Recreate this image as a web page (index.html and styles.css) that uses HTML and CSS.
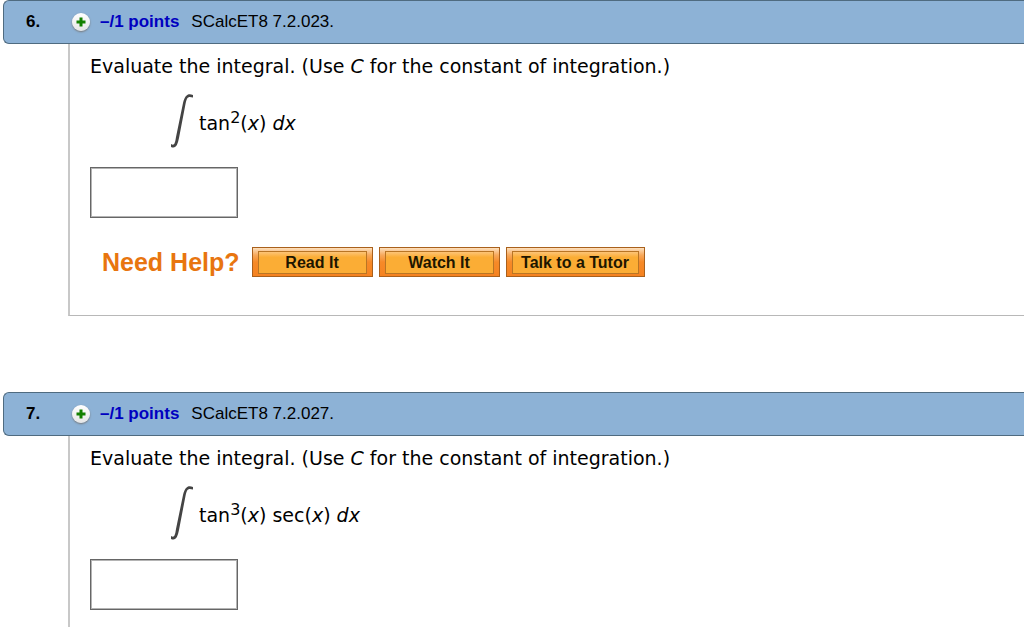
FILE: index.html
```html
<!DOCTYPE html>
<html lang="en">
<head>
<meta charset="utf-8">
<title>Homework</title>
<link rel="stylesheet" href="styles.css">
</head>
<body>
<main class="assignment">
  <section class="question">
    <header class="question-header">
      <span class="number">6.</span>
      <button class="expand" type="button" aria-label="Expand question 6 details">
        <svg class="plus" viewBox="0 0 18 18" aria-hidden="true"><path d="M7.500 4.500h3v3h3v3h-3v3h-3v-3h-3v-3h3z"/></svg>
      </button>
      <a class="points" href="#points-6">–/1 points</a>
      <span class="source">SCalcET8 7.2.023.</span>
    </header>
    <div class="question-body">
      <label class="prompt" for="answer-6">Evaluate the integral. (Use <i>C</i> for the constant of integration.)</label>
      <div class="formula">
        <svg class="integral" viewBox="0 0 22 54" role="img" aria-label="integral"><path d="M22 1C17-1 14 1 12 9L5 43C4 50 3 52 0 50V53C5 55 6.500 51 8 44L14.500 10C16 3 17 2 22 3.500z"/></svg>
        <span class="expression">tan<sup>2</sup>(<i>x</i>) <i>dx</i></span>
      </div>
      <input class="answer" id="answer-6" type="text">
      <div class="help">
        <span class="help-label">Need Help?</span>
        <button class="help-button" type="button"><span class="help-face">Read It</span></button>
        <button class="help-button" type="button"><span class="help-face">Watch It</span></button>
        <button class="help-button help-button-wide" type="button"><span class="help-face">Talk to a Tutor</span></button>
      </div>
    </div>
  </section>
  <section class="question">
    <header class="question-header">
      <span class="number">7.</span>
      <button class="expand" type="button" aria-label="Expand question 7 details">
        <svg class="plus" viewBox="0 0 18 18" aria-hidden="true"><path d="M7.500 4.500h3v3h3v3h-3v3h-3v-3h-3v-3h3z"/></svg>
      </button>
      <a class="points" href="#points-7">–/1 points</a>
      <span class="source">SCalcET8 7.2.027.</span>
    </header>
    <div class="question-body">
      <label class="prompt" for="answer-7">Evaluate the integral. (Use <i>C</i> for the constant of integration.)</label>
      <div class="formula">
        <svg class="integral" viewBox="0 0 22 54" role="img" aria-label="integral"><path d="M22 1C17-1 14 1 12 9L5 43C4 50 3 52 0 50V53C5 55 6.500 51 8 44L14.500 10C16 3 17 2 22 3.500z"/></svg>
        <span class="expression">tan<sup>3</sup>(<i>x</i>) sec(<i>x</i>) <i>dx</i></span>
      </div>
      <input class="answer" id="answer-7" type="text">
    </div>
  </section>
</main>
</body>
</html>
```
FILE: styles.css
```css
* {
  box-sizing: border-box;
}

body {
  margin: 0;
  background: #fff;
  color: #000;
  font-family: Verdana, "DejaVu Sans", sans-serif;
  font-size: 19px;
}

.assignment {
  display: flex;
  flex-direction: column;
  gap: 76px;
  min-height: 100vh;
}

.question {
  display: flex;
  flex-direction: column;
}

.question:last-child {
  flex: 1;
}

.question-header {
  display: flex;
  align-items: center;
  height: 44px;
  margin-left: 3px;
  padding-left: 22px;
  border: 1px solid #4f6b80;
  border-right: 0;
  border-radius: 6px 0 0 6px;
  background: #8db2d6;
  font-family: "Liberation Sans", Arial, sans-serif;
  font-size: 17px;
}

.number {
  width: 46px;
  font-weight: bold;
}

.expand {
  width: 18px;
  height: 18px;
  padding: 0;
  border: 0;
  border-radius: 50%;
  background: linear-gradient(#fff, #e6e6e6);
  box-shadow: 0 1px 2px #777;
}

.plus {
  display: block;
  width: 18px;
  height: 18px;
  fill: #138000;
}

.points {
  margin: 0 12px 0 10px;
  color: #0000c0;
  font-weight: bold;
  text-decoration: none;
}

.question-body {
  display: flex;
  flex-direction: column;
  align-items: flex-start;
  margin-left: 68px;
  padding: 10px 0 38px 20px;
  border-left: 2px solid #c8c8c8;
  border-bottom: 1px solid #b8b8b8;
}

.question:last-child .question-body {
  flex: 1;
  padding-bottom: 18px;
  border-bottom: 0;
}

.prompt {
  line-height: 24px;
}

.formula {
  display: flex;
  align-items: center;
  gap: 6px;
  margin: 16px 0 19px 81px;
}

.integral {
  width: 22px;
  height: 54px;
  fill: #444;
}

.expression {
  padding-top: 4px;
  line-height: 24px;
}

.expression sup {
  font-size: 16px;
  line-height: 0;
  vertical-align: 7px;
}

.answer {
  width: 148px;
  height: 51px;
  padding: 4px 8px;
  border: 1px solid #666;
  border-radius: 0;
  background: #fff;
  box-shadow: inset 0 0 0 1px #b4b4b4;
  font: inherit;
}

.help {
  display: flex;
  align-items: center;
  gap: 6px;
  margin: 29px 0 0 12px;
  font-family: "Liberation Sans", Arial, sans-serif;
  font-weight: bold;
}

.help-label {
  margin-right: 6px;
  color: #e8750f;
  font-size: 25px;
  line-height: 28px;
}

.help-button {
  width: 121px;
  height: 30px;
  padding: 3px 5px;
  border: 1px solid #a9601c;
  background: linear-gradient(#fde0bd, #f7a95c 25%, #f68a28 50%, #f58220);
  color: #1e1600;
  font: inherit;
  font-size: 16px;
}

.help-button-wide {
  width: 139px;
}

.help-face {
  display: block;
  padding-top: 1px;
  border: 1px solid #b97524;
  background: linear-gradient(#fdc477, #fbad35 25%);
  line-height: 20px;
  white-space: nowrap;
}
```
